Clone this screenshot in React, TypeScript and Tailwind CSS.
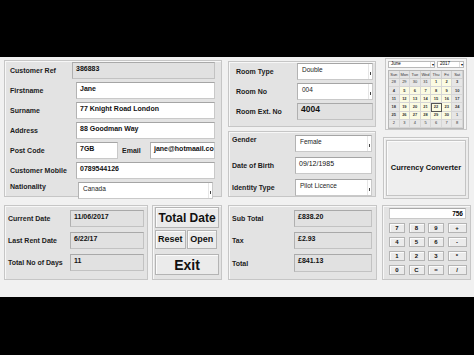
import clsx from "clsx";

const font = { fontFamily: '"Liberation Sans", Arial, sans-serif' };

function Group({ className, children }: { className?: string; children?: React.ReactNode }) {
  return (
    <div
      className={clsx(
        "bg-[#e3e3e3] border border-[#c6c6c6] shadow-[inset_1px_1px_0_#f7f7f7]",
        className,
      )}
    >
      {children}
    </div>
  );
}

function Label({ text, className }: { text: string; className?: string }) {
  return (
    <div className={clsx("text-[7px] font-bold text-[#1c1c1c] leading-none whitespace-nowrap", className)}>
      {text}
    </div>
  );
}

function TextBox({
  value,
  className,
  readOnly,
  bold = true,
}: {
  value: string;
  className?: string;
  readOnly?: boolean;
  bold?: boolean;
}) {
  return (
    <div
      className={clsx(
        "h-[17px] border px-[3px] pt-[2px] text-[7px] leading-none text-[#111] whitespace-nowrap overflow-hidden",
        readOnly
          ? "bg-[#e1e1e1] border-[#c2c2c2] border-t-[#a9a9a9] border-l-[#b0b0b0]"
          : "bg-white border-[#c9c9c9] border-t-[#a5a5a5] border-l-[#b3b3b3]",
        bold && "font-bold",
        className,
      )}
    >
      {value}
    </div>
  );
}

function Combo({ value, className }: { value: string; className?: string }) {
  return (
    <div
      className={clsx(
        "h-[17px] flex bg-white border border-[#c9c9c9] border-t-[#a5a5a5] border-l-[#b3b3b3] text-[6.5px] leading-none text-[#222]",
        className,
      )}
    >
      <div className="flex-1 pl-[4px] pt-[3px] whitespace-nowrap">{value}</div>
      <div className="w-[4px] flex flex-col items-center justify-center border-l border-[#e6e6e6] pt-[3px]">
        <span className="w-[1px] h-[3px] bg-[#444]" />
      </div>
    </div>
  );
}

function Btn({ text, className }: { text: string; className?: string }) {
  return (
    <div
      className={clsx(
        "flex items-center justify-center bg-[#ebebeb] border border-[#b4b4b4] shadow-[inset_1px_1px_0_#fbfbfb] font-bold text-[#111] leading-none",
        className,
      )}
    >
      {text}
    </div>
  );
}

const weeks = [
  ["28", "29", "30", "31", "1", "2", "3"],
  ["4", "5", "6", "7", "8", "9", "10"],
  ["11", "12", "13", "14", "15", "16", "17"],
  ["18", "19", "20", "21", "22", "23", "24"],
  ["25", "26", "27", "28", "29", "30", "1"],
  ["2", "3", "4", "5", "6", "7", "8"],
];

function Calendar() {
  return (
    <div className="w-[82px] h-[72px] ml-[2px] -mt-[2px] bg-[#f4f4f4] border border-[#c8c8c8] px-[2px] pt-[2px] flex flex-col">
      <div className="flex gap-[2px] h-[8px]">
        <div className="w-[47px] flex justify-between items-center bg-white border border-[#b9b9b9] pl-[2px] text-[4.5px] leading-none">
          <span>June</span>
          <span className="w-[4px] h-full border-l border-[#ddd] flex items-center justify-center text-[4px]">▾</span>
        </div>
        <div className="flex-1 flex justify-between items-center bg-white border border-[#b9b9b9] pl-[2px] text-[4.5px] leading-none">
          <span>2017</span>
          <span className="w-[4px] h-full border-l border-[#ddd] flex items-center justify-center text-[4px]">▾</span>
        </div>
      </div>
      <div className="mt-[2px] border border-[#b8b8b8] grid grid-cols-7 text-[4px] leading-none text-[#333]">
        {["Sun", "Mon", "Tue", "Wed", "Thu", "Fri", "Sat"].map((d) => (
          <div
            key={d}
            className="h-[7.5px] flex items-center justify-center bg-[#e4e4e4] border-r border-b border-[#cfcfcf]"
          >
            {d}
          </div>
        ))}
        {weeks.map((w, r) =>
          w.map((d, c) => {
            const inMonth = !(r === 0 && c < 4) && !(r === 4 && c === 6) && r !== 5;
            const weekday = c > 0 && c < 6;
            return (
              <div
                key={`${r}-${c}`}
                className={clsx(
                  "h-[8.2px] flex items-center justify-center border-r border-b border-[#d6d6d6]",
                  inMonth && weekday ? "bg-[#fbfbe2] font-bold" : "bg-[#e6e6e6]",
                  inMonth && !weekday && "font-bold",
                  d === "22" && r === 3 && "outline outline-1 outline-[#555] -outline-offset-1",
                )}
              >
                {d}
              </div>
            );
          }),
        )}
      </div>
    </div>
  );
}

export default function App() {
  return (
    <div className="w-[474px] h-[355px] bg-black flex flex-col" style={font}>
      <div className="h-[57px]" />
      <div className="h-[240px] bg-[#f1f1f1] flex flex-col">
        {/* top row */}
        <div className="flex pt-[3px] pl-[4px]">
          <Group className="w-[218px] h-[137px] pl-[5px] pr-[6px] pt-[1px] flex flex-col gap-[3px]">
            <div className="flex items-center">
              <Label text="Customer Ref" className="w-[62px]" />
              <TextBox value="386883" readOnly className="flex-1" />
            </div>
            <div className="flex items-center">
              <Label text="Firstname" className="w-[66px]" />
              <TextBox value="Jane" className="flex-1" />
            </div>
            <div className="flex items-center">
              <Label text="Surname" className="w-[66px]" />
              <TextBox value="77 Knight Road London" className="flex-1" />
            </div>
            <div className="flex items-center">
              <Label text="Address" className="w-[66px]" />
              <TextBox value="88 Goodman Way" className="flex-1" />
            </div>
            <div className="flex items-center">
              <Label text="Post Code" className="w-[66px]" />
              <TextBox value="7GB" className="w-[42px]" />
              <Label text="Email" className="w-[32px] pl-[4px]" />
              <TextBox value="jane@hotmaail.co" className="flex-1" />
            </div>
            <div className="flex items-center">
              <Label text="Customer Mobile" className="w-[66px]" />
              <TextBox value="0789544126" className="flex-1" />
            </div>
            <div className="flex items-start">
              <Label text="Nationality" className="w-[68px] pt-[1px]" />
              <Combo value="Canada" className="flex-1 mr-[2px] h-[16px]" />
            </div>
          </Group>

          <div className="ml-[6px] w-[148px] flex flex-col">
            <Group className="mt-[1px] h-[66px] pl-[7px] pr-[2px] pt-[1px] flex flex-col gap-[3px]">
              <div className="flex items-center">
                <Label text="Room Type" className="w-[61px]" />
                <Combo value="Double" className="flex-1" />
              </div>
              <div className="flex items-center">
                <Label text="Room No" className="w-[61px]" />
                <Combo value="004" className="flex-1" />
              </div>
              <div className="flex items-center">
                <Label text="Room Ext. No" className="w-[61px]" />
                <TextBox value="4004" readOnly className="flex-1 !text-[8.5px] !pt-[1px]" />
              </div>
            </Group>
            <Group className="mt-[4px] h-[66px] pl-[3px] pr-[3px] pt-[3px] flex flex-col gap-[5px]">
              <div className="flex items-start">
                <Label text="Gender" className="w-[63px] pt-[1px]" />
                <Combo value="Female" className="flex-1 h-[16px]" />
              </div>
              <div className="flex items-center">
                <Label text="Date of Birth" className="w-[63px]" />
                <TextBox value="09/12/1985" bold={false} className="flex-1 h-[16px] text-[6.5px]" />
              </div>
              <div className="flex items-center">
                <Label text="Identity Type" className="w-[63px]" />
                <Combo value="Pilot Licence" className="flex-1 h-[16px]" />
              </div>
            </Group>
          </div>

          <div className="ml-[7px] w-[86px] flex flex-col">
            <Calendar />
            <Group className="mt-[7px] h-[62px] p-[2px] bg-[#ececec]">
              <Btn text="Currency Converter" className="h-full text-[7.5px] bg-[#eeeeee] border-[#c4c4c4]" />
            </Group>
          </div>
        </div>

        {/* bottom row */}
        <div className="flex pl-[4px] mt-[6px] h-[75px]">
          <Group className="w-[144px] pl-[3px] pr-[3px] pt-[4px] flex flex-col gap-[5px]">
            <div className="flex items-center">
              <Label text="Current Date" className="w-[62px]" />
              <TextBox value="11/06/2017" readOnly className="flex-1" />
            </div>
            <div className="flex items-center">
              <Label text="Last Rent Date" className="w-[62px]" />
              <TextBox value="6/22/17" readOnly className="flex-1" />
            </div>
            <div className="flex items-center">
              <Label text="Total No of Days" className="w-[62px]" />
              <TextBox value="11" readOnly className="flex-1" />
            </div>
          </Group>

          <Group className="ml-[4px] w-[70px] px-[2px] pt-[1px] flex flex-col">
            <Btn text="Total Date" className="h-[21px] text-[12px]" />
            <div className="flex gap-[1px] mt-[2px] pr-[2px]">
              <Btn text="Reset" className="flex-1 h-[19px] text-[9px]" />
              <Btn text="Open" className="flex-1 h-[19px] text-[9px]" />
            </div>
            <Btn text="Exit" className="h-[21px] mt-[5px] text-[14px]" />
          </Group>

          <Group className="ml-[6px] w-[149px] pl-[3px] pr-[4px] pt-[4px] flex flex-col gap-[5px]">
            <div className="flex items-center">
              <Label text="Sub Total" className="w-[62px]" />
              <TextBox value="£838.20" readOnly className="flex-1" />
            </div>
            <div className="flex items-center">
              <Label text="Tax" className="w-[62px]" />
              <TextBox value="£2.93" readOnly className="flex-1" />
            </div>
            <div className="flex items-center">
              <Label text="Total" className="w-[62px]" />
              <TextBox value="£841.13" readOnly className="flex-1 h-[18px]" />
            </div>
          </Group>

          <Group className="ml-[5px] w-[89px] pl-[6px] pr-[4px] pt-[2px] flex flex-col">
            <div className="h-[11px] bg-white border border-[#c9c9c9] border-t-[#a9a9a9] text-[6.5px] font-bold leading-none text-right pr-[2px] pt-[2px]">
              756
            </div>
            <div className="mt-[4px] grid grid-cols-[16px_16px_16px_19px] gap-x-[3.5px] gap-y-[4px]">
              {["7", "8", "9", "+", "4", "5", "6", "-", "1", "2", "3", "*", "0", "C", "=", "/"].map((k) => (
                <Btn
                  key={k}
                  text={k}
                  className={clsx(
                    "h-[10px] text-[6px]",
                    k === "6" && "border-[#6c6c6c]",
                  )}
                />
              ))}
            </div>
          </Group>
        </div>
      </div>
      <div className="flex-1" />
    </div>
  );
}
